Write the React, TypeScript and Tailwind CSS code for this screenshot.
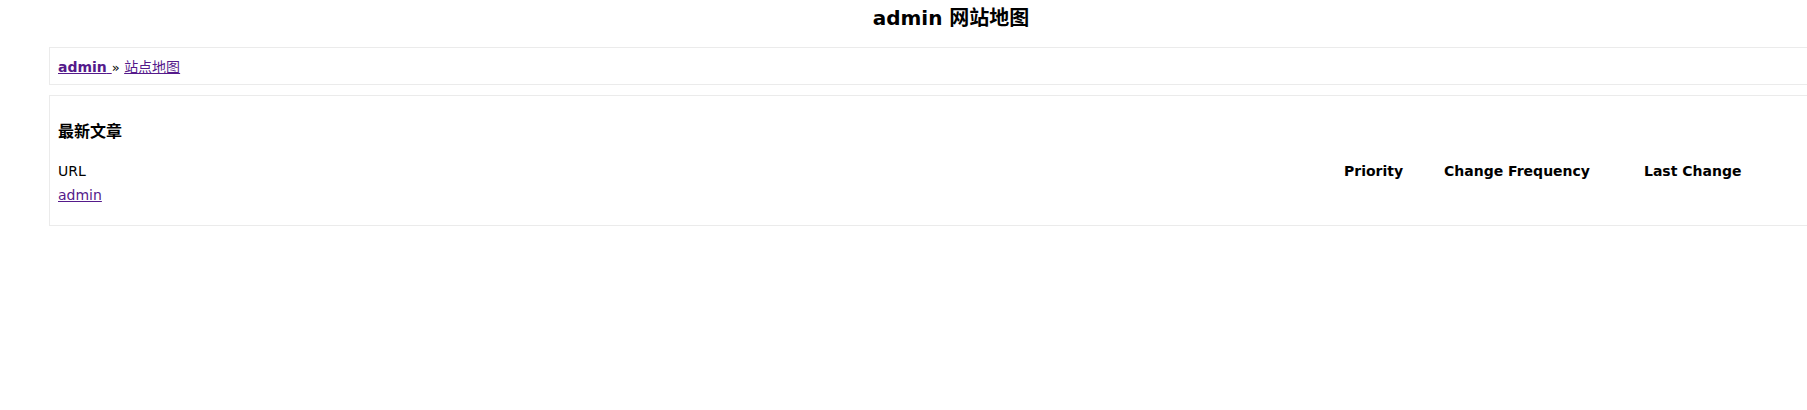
const font = "font-['DejaVu_Sans','Noto_Sans_CJK_SC',sans-serif]";

export default function App() {
  return (
    <div className={`w-[1902px] min-h-[410px] bg-white text-black ${font}`}>
      <h1 className="pt-[6px] text-center text-[20px] font-bold leading-[24px]">
        admin 网站地图
      </h1>

      <div className="mx-[49px] mt-[17px] h-[38px] overflow-hidden border border-[#ebebeb] pl-2 text-[14px] leading-[38px]">
        <a href="#" className="font-bold text-[#551a8b] underline">
          admin{" "}
        </a>
        <span className="text-[13px]">»</span>{" "}
        <a href="#" className="text-[#551a8b] underline">
          站点地图
        </a>
      </div>

      <div className="mx-[49px] mt-[10px] h-[131px] border border-[#ebebeb] px-2 pt-[26px]">
        <h3 className="text-[16px] font-bold leading-[20px]">最新文章</h3>
        <div className="mt-[21px] grid grid-cols-[1286px_100px_200px_1fr] text-[14px] leading-[17px]">
          <div>URL</div>
          <div className="font-bold">Priority</div>
          <div className="font-bold">Change Frequency</div>
          <div className="font-bold">Last Change</div>
        </div>
        <div className="mt-[7px] grid grid-cols-[1286px_100px_200px_1fr] text-[14px] leading-[17px]">
          <a href="#" className="text-[#551a8b] underline">
            admin
          </a>
          <div />
          <div />
          <div />
        </div>
      </div>
    </div>
  );
}
